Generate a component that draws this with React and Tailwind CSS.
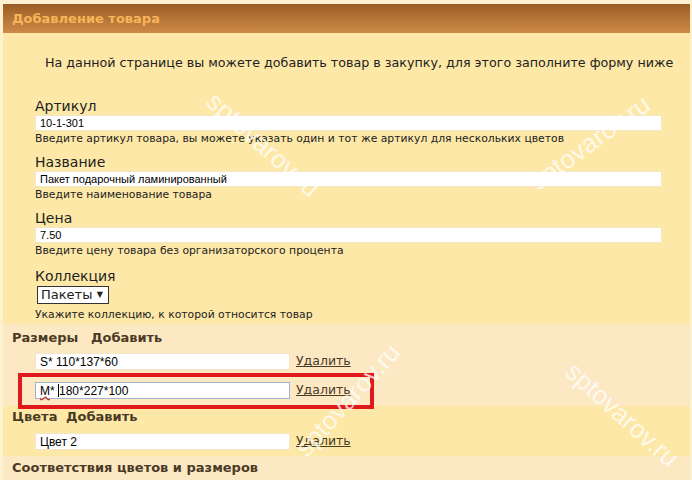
import React from 'react';

const Field = ({ label, value, hint }) => (
  <div className="pl-8 pr-7">
    <div className="h-[18px] leading-[18px] text-[14px] text-[#222]">{label}</div>
    <input
      readOnly
      value={value}
      className="block w-full h-4 bg-white border border-[#f3e6c8] px-1 text-[11px] text-black font-['Liberation_Sans',sans-serif] outline-none"
    />
    <div className="h-[15px] leading-[15px] text-[10.8px] text-[#222]">{hint}</div>
  </div>
);

const Row = ({ children, focused }) => (
  <div className="flex items-center pl-8 h-[17px]">
    <div
      className={`flex items-center w-[255px] h-[17px] bg-white px-1 text-[12px] text-black font-['Liberation_Sans',sans-serif] border ${focused ? 'border-[#9fb2d2]' : 'border-[#f3e6c8]'}`}
    >
      {children}
    </div>
    <a className="ml-[6px] text-[12.5px] text-[#4a3b24] underline leading-none">Удалить</a>
  </div>
);

const Mark = ({ className }) => (
  <div
    className={`absolute -translate-x-1/2 -translate-y-1/2 text-[26px] text-white/75 font-['Liberation_Sans',sans-serif] whitespace-nowrap pointer-events-none ${className}`}
  >
    sptovarov.ru
  </div>
);

export default function App() {
  return (
    <div className="relative w-[692px] h-[480px] overflow-hidden bg-[#fdf1cf] pt-1 pl-[3px] pr-[2px] font-['DejaVu_Sans',sans-serif]">
      {/* header bar */}
      <div className="h-[29px] bg-gradient-to-b from-[#9c5e27] to-[#cc8b47] flex items-center pl-[9px]">
        <span className="text-[13px] font-bold text-[#f6b558]">Добавление товара</span>
      </div>

      <div className="bg-[#fde8a7]">
        <div className="pt-[21px] pl-[42px] h-[64px] text-[12.7px] leading-[18px] text-[#222] whitespace-nowrap">
          На данной странице вы можете добавить товар в закупку, для этого заполните форму ниже
        </div>
        <div className="flex flex-col gap-[7px]">
          <Field
            label="Артикул"
            value="10-1-301"
            hint="Введите артикул товара, вы можете указать один и тот же артикул для нескольких цветов"
          />
          <Field label="Название" value="Пакет подарочный ламинированный" hint="Введите наименование товара" />
          <Field label="Цена" value="7.50" hint="Введите цену товара без организаторского процента" />
        </div>
        <div className="pl-8 pt-[9px] pb-[2px]">
          <div className="h-[18px] leading-[18px] text-[14px] text-[#222]">Коллекция</div>
          <div className="mt-[1px] ml-[2px] w-[72px] h-[18px] border border-[#333] bg-white flex items-center justify-between pl-[3px] pr-[5px] text-[13px] text-[#222]">
            <span>Пакеты</span>
            <span className="text-[8px]">▼</span>
          </div>
          <div className="mt-[3px] h-[15px] leading-[15px] text-[10.8px] text-[#222]">
            Укажите коллекцию, к которой относится товар
          </div>
        </div>
      </div>

      {/* Размеры */}
      <div className="bg-[#fde8c4] h-[82px] pt-[5px] pl-[9px]">
        <div className="h-[18px] leading-[18px] text-[13px] font-bold text-[#4a3b24]">
          Размеры <span className="ml-[8px]">Добавить</span>
        </div>
        <div className="-ml-[9px] mt-[6px] flex flex-col gap-[12px]">
          <Row>S* 110*137*60</Row>
          <Row focused>
            <span className="underline decoration-wavy decoration-[#d02020]">M</span>
            <span>*&nbsp;</span>
            <span className="w-px h-[13px] bg-black" />
            <span>180*227*100</span>
          </Row>
        </div>
      </div>

      {/* Цвета */}
      <div className="bg-[#fde8a7] h-[50px] pt-[2px] pl-[9px]">
        <div className="h-[18px] leading-[18px] text-[13px] font-bold text-[#4a3b24]">
          Цвета <span className="ml-[4px]">Добавить</span>
        </div>
        <div className="-ml-[9px] mt-[7px]">
          <Row>Цвет 2</Row>
        </div>
      </div>

      {/* Соответствия */}
      <div className="bg-[#fde8c4] h-[30px] pt-[3px] pl-[9px]">
        <div className="h-[18px] leading-[18px] text-[13px] font-bold text-[#4a3b24]">
          Соответствия цветов и размеров
        </div>
      </div>

      {/* red annotation frame */}
      <div className="absolute left-[18px] top-[373px] w-[356px] h-[36px] border-[4px] border-[#e0191d]" />

      <Mark className="left-[263px] top-[145px] rotate-[42deg]" />
      <Mark className="left-[590px] top-[143px] rotate-[-36deg]" />
      <Mark className="left-[622px] top-[415px] rotate-[42deg]" />
      <Mark className="left-[348px] top-[400px] rotate-[-48deg]" />
    </div>
  );
}
